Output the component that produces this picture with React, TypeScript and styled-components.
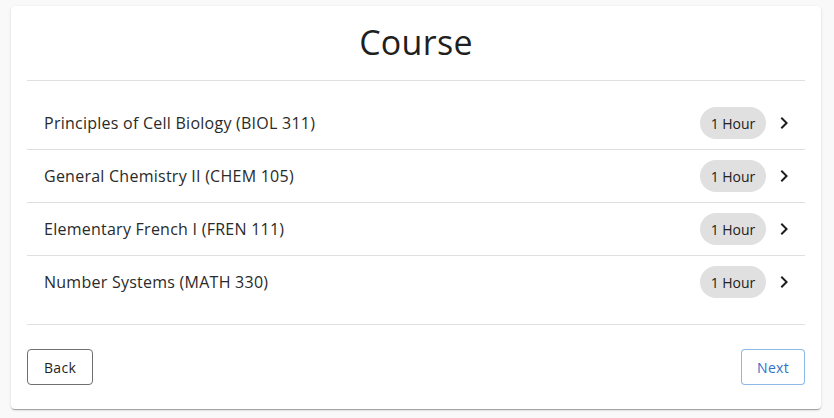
import React from "react";
import styled, { createGlobalStyle } from "styled-components";

const Global = createGlobalStyle`
  html, body { margin: 0; padding: 0; background: #f9f9f9; }
  body { font-family: "Open Sans", "Noto Sans", sans-serif; color: rgba(0,0,0,0.87); }
`;

const Page = styled.div`
  padding: 6px 13px 9px 11px;
`;

const Card = styled.section`
  background: #fff;
  border-radius: 4px;
  box-shadow: 0 2px 1px -1px rgba(0,0,0,0.2), 0 1px 1px 0 rgba(0,0,0,0.14), 0 1px 3px 0 rgba(0,0,0,0.12);
  padding: 16px 16px 16px;
  display: flex;
  flex-direction: column;
`;

const Title = styled.h1`
  margin: 0 0 18px;
  font-size: 34px;
  line-height: 40px;
  font-weight: 400;
  letter-spacing: 0.3px;
  text-align: center;
  color: #1f1f1f;
`;

const Divider = styled.hr`
  margin: 0;
  border: 0;
  border-top: 1px solid #e0e0e0;
`;

const List = styled.ul`
  list-style: none;
  margin: 0;
  padding: 16px 0;
`;

const Row = styled.li`
  display: flex;
  align-items: center;
  height: 52px;
  padding: 0 9px 0 17px;
  border-bottom: 1px solid #e0e0e0;
  &:last-child { border-bottom: 0; }
`;

const RowLabel = styled.span`
  flex: 1;
  font-size: 16px;
  letter-spacing: 0.25px;
  color: #2a2a2a;
`;

const Badge = styled.span`
  display: inline-flex;
  align-items: center;
  justify-content: center;
  height: 32px;
  width: 66px;
  border-radius: 16px;
  background: #e0e0e0;
  font-size: 14px;
  color: #222;
`;

const Chevron = styled.svg`
  width: 24px;
  height: 24px;
  margin-left: 6px;
  fill: #1e1e1e;
`;

const Footer = styled.div`
  display: flex;
  justify-content: space-between;
  padding: 24px 0 8px;
`;

const Button = styled.button<{ $tone: "neutral" | "primary" }>`
  height: 36px;
  padding: 0 ${(p) => (p.$tone === "primary" ? "15px" : "16px")};
  border-radius: 4px;
  background: #fff;
  font-family: inherit;
  font-size: 14px;
  letter-spacing: 0.3px;
  cursor: pointer;
  border: 1px solid ${(p) => (p.$tone === "primary" ? "rgba(25,118,210,0.5)" : "#6f6f6f")};
  color: ${(p) => (p.$tone === "primary" ? "#2f73c9" : "#1f1f1f")};
`;

const courses = [
  "Principles of Cell Biology (BIOL 311)",
  "General Chemistry II (CHEM 105)",
  "Elementary French I (FREN 111)",
  "Number Systems (MATH 330)",
];

export default function App() {
  return (
    <Page>
      <Global />
      <Card>
        <Title>Course</Title>
        <Divider />
        <List>
          {courses.map((c) => (
            <Row key={c}>
              <RowLabel>{c}</RowLabel>
              <Badge>1 Hour</Badge>
              <Chevron viewBox="0 0 24 24">
                <path d="M10 6 8.59 7.41 13.17 12l-4.58 4.59L10 18l6-6z" />
              </Chevron>
            </Row>
          ))}
        </List>
        <Divider />
        <Footer>
          <Button $tone="neutral">Back</Button>
          <Button $tone="primary">Next</Button>
        </Footer>
      </Card>
    </Page>
  );
}
